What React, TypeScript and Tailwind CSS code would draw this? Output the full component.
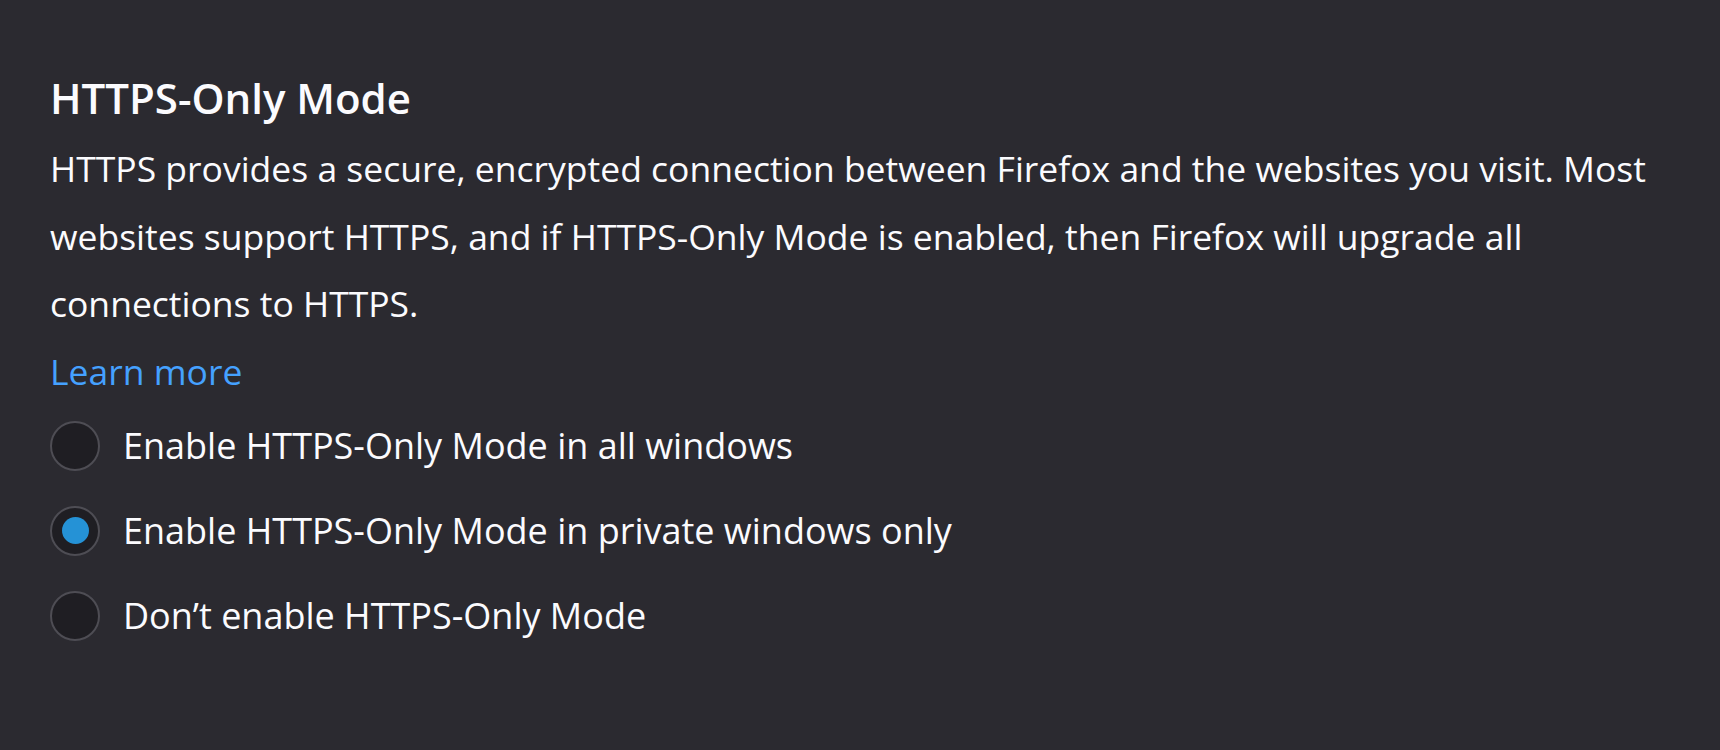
import React from "react";

function Radio({ checked, label }: { checked?: boolean; label: string }) {
  return (
    <div className="flex h-[85px] items-center">
      <div className="flex h-[50px] w-[50px] shrink-0 items-center justify-center rounded-full border-2 border-[#4e4d54] bg-[#1f1e23]">
        {checked && <div className="h-[27px] w-[27px] rounded-full bg-[#2592d6]" />}
      </div>
      <span className="ml-[23px] whitespace-nowrap text-[36px] text-[#fbfbfe]">{label}</span>
    </div>
  );
}

export default function App() {
  return (
    <div className="h-[750px] w-[1720px] overflow-hidden bg-[#2b2a30] pl-[50px] pt-[70px] text-[#fbfbfe] font-['Open_Sans',sans-serif]">
      <h1 className="text-[42px] font-semibold leading-[56px]">HTTPS-Only Mode</h1>
      <p className="mt-[9px] whitespace-nowrap text-[35.5px] leading-[67.5px]">
        HTTPS provides a secure, encrypted connection between Firefox and the websites you visit. Most
        <br />
        websites support HTTPS, and if HTTPS-Only Mode is enabled, then Firefox will upgrade all
        <br />
        connections to HTTPS.
      </p>
      <a className="block w-fit text-[35.5px] leading-[67.5px] text-[#45a1ff]" href="#">
        Learn more
      </a>
      <div className="mt-[-2px] flex flex-col">
        <Radio label="Enable HTTPS-Only Mode in all windows" />
        <Radio checked label="Enable HTTPS-Only Mode in private windows only" />
        <Radio label="Don’t enable HTTPS-Only Mode" />
      </div>
    </div>
  );
}
